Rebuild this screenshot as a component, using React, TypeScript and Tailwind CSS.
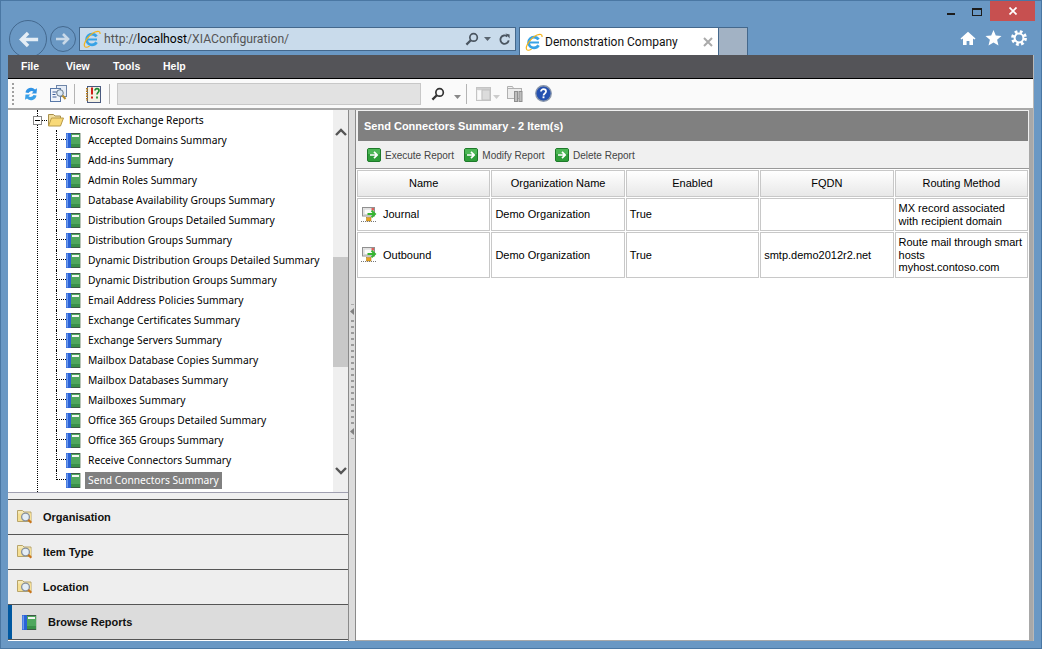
import React from "react";

const Book = ({ className = "" }: { className?: string }) => (
  <svg width="15" height="15" viewBox="0 0 15 15" className={className}>
    <rect x="0" y="0" width="15" height="15" fill="#3d5a46" />
    <rect x="0" y="0" width="5" height="15" fill="#2a62d8" />
    <rect x="0.500" y="0.500" width="1.500" height="14" fill="#6f9bec" />
    <rect x="5" y="1" width="9" height="13" fill="#4fa75e" />
    <rect x="5" y="11" width="9" height="3" fill="#3a9049" />
    <rect x="6" y="2" width="7" height="2" fill="#f2f6f2" />
    <rect x="14" y="0" width="1" height="15" fill="#b9c4ba" />
  </svg>
);

const FolderSearch = () => (
  <svg width="17" height="16" viewBox="0 0 17 16">
    <path d="M.5 1.500h5l1.500 1.500h7v9.500H.5z" fill="#f5e9b8" stroke="#b8a468" />
    <path d="M1 4.500h13v7.500H1z" fill="#f6df92" />
    <circle cx="8.500" cy="8" r="3.900" fill="#e4edf6" stroke="#87919c" strokeWidth="1.300" />
    <path d="M11.300 10.800l3 3" stroke="#c8741c" strokeWidth="2.200" />
  </svg>
);

const OpenFolder = () => (
  <svg width="17" height="14" viewBox="0 0 17 14">
    <path d="M1.500 13V1.500h5l1.500 1.500h5.500V5" fill="#f2dfa0" stroke="#a88f4c" />
    <path d="M1.500 13l3-8h12l-3 8z" fill="#f8d978" stroke="#b89a48" />
  </svg>
);

const GreenArrow = () => (
  <svg width="14" height="14" viewBox="0 0 14 14">
    <rect x="0.500" y="0.500" width="13" height="13" rx="1.500" fill="#2f9e3a" stroke="#1e7a2a" />
    <rect x="1" y="1" width="12" height="5" fill="#4cb655" />
    <path d="M3 7h6.500M7 3.800L10.200 7 7 10.200" fill="none" stroke="#fff" strokeWidth="1.700" />
  </svg>
);

const Connector = () => (
  <svg width="17" height="16" viewBox="0 0 17 16">
    <rect x="1.500" y="0.500" width="12" height="8.500" fill="#eeeeee" stroke="#909090" />
    <rect x="3" y="2" width="9" height="5.500" fill="#fbfbfb" stroke="#d4d4d4" />
    <rect x="10.500" y="1" width="2.500" height="2.500" fill="#e0605a" />
    <path d="M6.500 7h7M10.500 3.600L14 7l-3.500 3.400" fill="none" stroke="#36b532" strokeWidth="2" />
    <rect x="5.500" y="10.500" width="4.500" height="3.500" fill="#e8a420" stroke="#a87510" strokeWidth="0.500" />
    <path d="M0 14.500h16" stroke="#777" strokeDasharray="1 1" />
  </svg>
);

const IeLogo = () => (
  <svg width="18" height="18" viewBox="0 0 18 18">
    <circle cx="9" cy="9.500" r="5.400" fill="none" stroke="#38a3e6" strokeWidth="2.800" strokeDasharray="27 7" strokeDashoffset="-3" />
    <path d="M4 9.500h10" stroke="#38a3e6" strokeWidth="2" />
    <path d="M2 16.500c-3-2 4-12 10-14.500 3-1 5.500-1 5 2M1.600 16.500c1 1.400 3.600.6 5-.4" fill="none" stroke="#f4b41a" strokeWidth="1.200" />
  </svg>
);

const Sep = () => <div className="h-[20px] w-px bg-[#b4b4b4]" />;

const Search = ({ color = "#333" }: { color?: string }) => (
  <svg width="14" height="14" viewBox="0 0 15 15">
    <circle cx="9.200" cy="5.800" r="4" fill="none" stroke={color} strokeWidth="1.800" />
    <path d="M6.200 8.800L1.500 13.500" stroke={color} strokeWidth="2.400" />
  </svg>
);

const Caret = ({ color = "#888" }: { color?: string }) => (
  <svg width="7" height="4" viewBox="0 0 7 4"><path d="M0 0h7L3.500 4z" fill={color} /></svg>
);

const items = [
  "Accepted Domains Summary",
  "Add-ins Summary",
  "Admin Roles Summary",
  "Database Availability Groups Summary",
  "Distribution Groups Detailed Summary",
  "Distribution Groups Summary",
  "Dynamic Distribution Groups Detailed Summary",
  "Dynamic Distribution Groups Summary",
  "Email Address Policies Summary",
  "Exchange Certificates Summary",
  "Exchange Servers Summary",
  "Mailbox Database Copies Summary",
  "Mailbox Databases Summary",
  "Mailboxes Summary",
  "Office 365 Groups Detailed Summary",
  "Office 365 Groups Summary",
  "Receive Connectors Summary",
  "Send Connectors Summary",
];

const TreeRow = ({ label, last }: { label: string; last: boolean }) => (
  <div className="flex h-[20px] items-center">
    {last ? (
      <div className="h-[10px] w-[10px] self-start border-b border-l border-dotted border-black" />
    ) : (
      <div className="h-[20px] w-[10px] self-start border-l border-dotted border-black">
        <div className="h-[10px] border-b border-dotted border-black" />
      </div>
    )}
    <Book />
    <span
      className={
        last
          ? "ml-[4px] flex h-[17px] items-center bg-[#808080] px-[3px] pt-px text-white"
          : "ml-[7px] pt-[2px] text-black"
      }
    >
      {label}
    </span>
  </div>
);

const Accordion = ({ label }: { label: string }) => (
  <div className="flex h-[35px] items-center border-b border-[#555] bg-[#eeeeee] pl-[9px]">
    <FolderSearch />
    <span className="ml-[9px] text-[11px] font-bold text-[#111]">{label}</span>
  </div>
);

const Action = ({ label }: { label: string }) => (
  <div className="flex items-center">
    <GreenArrow />
    <span className="ml-[4px] text-[10px] text-[#444]">{label}</span>
  </div>
);

const rows = [
  ["Journal", "Demo Organization", "True", "", "MX record associated with recipient domain"],
  ["Outbound", "Demo Organization", "True", "smtp.demo2012r2.net", "Route mail through smart hosts myhost.contoso.com"],
];

export default function App() {
  return (
    <div className="h-[649px] w-[1042px] overflow-hidden border border-[#4a77a3] bg-[#6a98c4] font-['Liberation_Sans',sans-serif]">
      {/* chrome */}
      <div className="flex h-[54px]">
        <div className="mt-[19px] flex h-[35px] items-start pl-[8px]">
          <div className="flex h-[38px] w-[38px] shrink-0 items-center justify-center rounded-full border-[1.500px] border-[#44698f]">
            <svg width="21" height="19" viewBox="0 0 24 20">
              <path d="M23 10H5M11.500 2.500L4 10l7.500 7.500" fill="none" stroke="#e4edf5" strokeWidth="4" />
            </svg>
          </div>
          <div className="ml-[3px] mt-[6px] flex h-[26px] w-[26px] shrink-0 items-center justify-center rounded-full border-[1.500px] border-[#44698f]">
            <svg width="16" height="14" viewBox="0 0 16 14">
              <path d="M1 7h12M8 2l5 5-5 5" fill="none" stroke="#c9d9e8" strokeWidth="2.600" />
            </svg>
          </div>
          <div className="ml-[3px] mt-[7px] flex h-[24px] w-[437px] items-center border border-[#44688c] bg-[#c9dbeb] pl-[3px] pr-[4px]">
            <IeLogo />
            <span className="ml-[3px] pt-px font-['Roboto',sans-serif] text-[12.200px] text-[#555]">
              http://<span className="text-black">localhost</span>/XIAConfiguration/
            </span>
            <div className="ml-auto flex items-center">
              <Search color="#4a5560" />
              <div className="ml-[5px]"><Caret color="#5a6570" /></div>
              <svg width="13" height="13" viewBox="0 0 14 14" className="ml-[7px]">
                <path d="M11.500 8a4.500 4.500 0 1 1-1.500-4.300" fill="none" stroke="#4a5560" strokeWidth="2" />
                <path d="M8 0.500l4.500 1v4.500z" fill="#4a5560" />
              </svg>
            </div>
          </div>
          <div className="ml-[3px] mt-[7px] flex h-[28px] w-[200px] items-center border border-b-0 border-[#44688c] bg-white pl-[5px]">
            <IeLogo />
            <span className="ml-[2px] pt-px font-['Roboto',sans-serif] text-[12px] text-[#111]">Demonstration Company</span>
            <svg width="10" height="10" viewBox="0 0 10 10" className="ml-auto mr-[5px]">
              <path d="M1 1l8 8M9 1l-8 8" stroke="#aaa" strokeWidth="2" />
            </svg>
          </div>
          <div className="mt-[7px] h-[28px] w-[29px] border border-b-0 border-l-0 border-[#44688c] bg-[#a2b2c4]" />
        </div>
        <div className="ml-auto flex flex-col items-end pr-[6px]">
          <div className="flex items-start">
            <div className="mr-[17px] mt-[12px] h-[2px] w-[8px] bg-[#1c1c1c]" />
            <div className="mr-[8px] mt-[7px] h-[8px] w-[10px] border border-t-2 border-[#1c1c1c]" />
            <div className="flex h-[20px] w-[45px] items-center justify-center bg-[#c75050]">
              <svg width="8" height="8" viewBox="0 0 8 8"><path d="M.5.5l7 7M7.500.5l-7 7" stroke="#fff" strokeWidth="1.700" /></svg>
            </div>
          </div>
          <div className="mr-[8px] mt-[9px] flex items-center gap-[9px]">
            <svg width="16" height="15" viewBox="0 0 16 15">
              <path d="M8 .8L.5 7.600l1 1L3 7.400V14h3.600v-4h2.800v4H13V7.400l1.500 1.200 1-1z" fill="#fff" />
            </svg>
            <svg width="17" height="16" viewBox="0 0 17 16">
              <path d="M8.500 0l2.300 5.400 5.700.5-4.400 3.800 1.400 5.800-5-3.100-5 3.100 1.400-5.800L.5 5.900l5.700-.5z" fill="#fff" />
            </svg>
            <svg width="16" height="16" viewBox="0 0 16 16">
              <circle cx="8" cy="8" r="4.400" fill="none" stroke="#fff" strokeWidth="2" />
              <circle cx="8" cy="8" r="6.200" fill="none" stroke="#fff" strokeWidth="3.400" strokeDasharray="2.600 2.270" />
            </svg>
          </div>
        </div>
      </div>

      {/* frame */}
      <div className="relative ml-[7px] flex h-[586px] w-[1026px] flex-col bg-[#b8b8b8] pr-px">
        <div className="flex h-[23px] items-center bg-[#545458] pl-[13px] text-[10.500px] font-bold text-white">
          <span className="w-[45px]">File</span>
          <span className="w-[47px]">View</span>
          <span className="w-[50px]">Tools</span>
          <span>Help</span>
        </div>
        <div className="h-px bg-black" />
        <div className="flex h-[31px] items-center border-b-2 border-[#a8a8a8] bg-[#fafafa] pl-[4px]">
          <div className="h-[22px] w-[2px] border-l-2 border-dotted border-[#a0a0a0]" />
          <svg width="14" height="16" viewBox="0 0 14 16" className="ml-[10px]">
            <path d="M1.500 6.500a5.500 5.500 0 0 1 9.500-3l2-1.300-.5 5.300H7.500l2-1.700A3.200 3.200 0 0 0 4.500 7z" fill="#2f93e6" />
            <path d="M12.500 9.500a5.500 5.500 0 0 1-9.500 3l-2 1.300.5-5.300h5l-2 1.700A3.200 3.200 0 0 0 9.500 9z" fill="#3aa0e8" />
          </svg>
          <svg width="17" height="17" viewBox="0 0 17 17" className="ml-[12px]">
            <rect x="6.500" y="0.500" width="10" height="11" fill="#e6edf7" stroke="#6f86a8" />
            <rect x="0.500" y="3.500" width="10" height="13" fill="#f0f4fa" stroke="#5878a8" />
            <path d="M2.500 7h5M2.500 9.500h3M2.500 12h4" stroke="#3f5f98" />
            <circle cx="10" cy="8" r="3.300" fill="#dceaf6" stroke="#6a7a8a" />
            <path d="M12.500 10.500l3 3.500" stroke="#b89030" strokeWidth="2" />
          </svg>
          <div className="ml-[7px]"><Sep /></div>
          <svg width="15" height="18" viewBox="0 0 15 18" className="ml-[11px]">
            <rect x="1.500" y="1.500" width="13" height="16" fill="#f4f1e4" stroke="#4a5a80" />
            <path d="M1 3v13" stroke="#b07a20" strokeWidth="2" strokeDasharray="1.500 1" />
            <path d="M6 2.500v7M6 11.500v2" stroke="#d0201a" strokeWidth="2" />
            <path d="M9 5.500c0-2.500 4-2.500 4 0 0 2-2 2-2 4M11 11.500v2" fill="none" stroke="#1e8a30" strokeWidth="1.700" />
          </svg>
          <div className="ml-[8px]"><Sep /></div>
          <div className="ml-[7px] h-[22px] w-[304px] border border-[#c8c8c8] bg-[#e2e2e2]" />
          <div className="ml-[10px]"><Search color="#333" /></div>
          <div className="ml-[9px] mt-[6px]"><Caret /></div>
          <div className="ml-[5px]"><Sep /></div>
          <svg width="15" height="14" viewBox="0 0 15 14" className="ml-[9px]">
            <rect x="0.500" y="0.500" width="14" height="13" fill="#f0f0f0" stroke="#c4c4c4" />
            <rect x="1" y="1" width="13" height="2" fill="#cfcfcf" />
            <rect x="6" y="3" width="8" height="10" fill="#dcdcdc" stroke="#c0c0c0" />
            <rect x="2" y="4" width="3" height="8" fill="#fafafa" />
          </svg>
          <div className="ml-[2px] mt-[7px]"><Caret color="#ccc" /></div>
          <svg width="17" height="16" viewBox="0 0 17 16" className="ml-[7px]">
            <path d="M.5 2.500V.5h5l1 2h8v4" fill="#f2f2f2" stroke="#b0b0b0" />
            <rect x="0.500" y="2.500" width="14" height="10" fill="#ececec" stroke="#b0b0b0" />
            <rect x="7.500" y="5.500" width="3" height="10" fill="#bdbdbd" stroke="#8f8f8f" />
            <rect x="12" y="5.500" width="3" height="10" fill="#bdbdbd" stroke="#8f8f8f" />
          </svg>
          <svg width="17" height="17" viewBox="0 0 18 18" className="ml-[11px]">
            <circle cx="9" cy="9" r="8.200" fill="#2450b0" stroke="#8a97aa" strokeWidth="1.400" />
            <path d="M6.300 7c0-3.400 5.400-3.400 5.400 0 0 2-2.700 2-2.700 4" fill="none" stroke="#fff" strokeWidth="1.800" />
            <rect x="8" y="12" width="2" height="2" fill="#fff" />
          </svg>
        </div>

        <div className="flex min-h-0 flex-1">
          {/* left */}
          <div className="flex w-[340px] flex-col bg-white">
            <div className="flex h-[383px] border-b border-[#a0a0b0]">
              <div className="ml-[29px] flex-1 whitespace-nowrap border-l border-dotted border-black font-['Noto_Sans',sans-serif] text-[10.250px]">
                <div className="flex h-[20px] items-center">
                  <div className="-ml-[5px] flex h-[9px] w-[9px] shrink-0 items-center justify-center border border-[#888] bg-white">
                    <div className="h-px w-[5px] bg-black" />
                  </div>
                  <div className="h-px w-[5px] border-b border-dotted border-black" />
                  <OpenFolder />
                  <span className="ml-[5px] pt-[2px] text-black">Microsoft Exchange Reports</span>
                </div>
                <div className="ml-[18px]">
                  {items.map((l, i) => (
                    <TreeRow key={l} label={l} last={i === items.length - 1} />
                  ))}
                </div>
              </div>
              <div className="flex w-[15px] flex-col items-center bg-[#efefef]">
                <svg width="12" height="8" viewBox="0 0 12 8" className="mt-[18px]">
                  <path d="M1 7l5-5 5 5" fill="none" stroke="#555" strokeWidth="2.400" />
                </svg>
                <div className="mt-[121px] h-[110px] w-[15px] bg-[#c8c8c8]" />
                <svg width="12" height="8" viewBox="0 0 12 8" className="mt-[100px]">
                  <path d="M1 1l5 5 5-5" fill="none" stroke="#555" strokeWidth="2.400" />
                </svg>
              </div>
            </div>
            <div className="h-[6px] bg-[#f0f0f0]" />
            <div className="h-px bg-[#555]" />
            <Accordion label="Organisation" />
            <Accordion label="Item Type" />
            <Accordion label="Location" />
            <div className="flex h-[35px] items-center border-b border-[#555] bg-[#dcdcdc]">
              <div className="h-full w-[4px] bg-[#0058a0]" />
              <Book className="ml-[10px]" />
              <span className="ml-[11px] text-[11px] font-bold text-[#111]">Browse Reports</span>
            </div>
          </div>

          {/* splitter */}
          <div className="flex w-[8px] flex-col items-center border-l border-r border-[#8a8a8a] bg-[#dcdcdc] pt-[194px]">
            <div className="h-px w-[3px] bg-[#aaa]" />
            <svg width="4" height="7" viewBox="0 0 4 7" className="mt-[3px]"><path d="M4 0v7L0 3.500z" fill="#808080" /></svg>
            <div className="mt-[5px] flex flex-col gap-[4px]">
              {Array.from({ length: 18 }).map((_, i) => (
                <div key={i} className="h-[2px] w-[3px] bg-[#9a9a9a]" />
              ))}
            </div>
            <svg width="4" height="7" viewBox="0 0 4 7" className="mt-[4px]"><path d="M4 0v7L0 3.500z" fill="#808080" /></svg>
            <div className="mt-[3px] h-px w-[3px] bg-[#aaa]" />
          </div>

          {/* right */}
          <div className="flex min-w-0 flex-1 flex-col border-b border-r-[4px] border-[#a8a8a8] bg-white">
            <div className="bg-[#f0f0f0] pl-[2px] pr-px pt-px">
              <div className="flex h-[30px] items-center bg-[#808080] pl-[6px] text-[11px] font-bold text-white">
                Send Connectors Summary - 2 Item(s)
              </div>
              <div className="flex h-[27px] items-center gap-[10.400px] pl-[9px] pt-px">
                <Action label="Execute Report" />
                <Action label="Modify Report" />
                <Action label="Delete Report" />
              </div>
            </div>
            <div className="h-px bg-[#999]" />
            <table className="w-full table-fixed border-separate border-spacing-[1px] text-[11px] text-black">
              <thead>
                <tr className="h-[27px]">
                  {["Name", "Organization Name", "Enabled", "FQDN", "Routing Method"].map((h) => (
                    <th key={h} className="border border-[#c8c8c8] bg-gradient-to-b from-white to-[#e8e8e8] p-0 text-center font-normal">
                      {h}
                    </th>
                  ))}
                </tr>
              </thead>
              <tbody>
                {rows.map((r, i) => (
                  <tr key={r[0]} className={i === 0 ? "h-[33px]" : "h-[46px]"}>
                    <td className="border border-[#c8c8c8] px-[3px] py-0">
                      <div className="flex items-center">
                        <Connector />
                        <span className="ml-[5px]">{r[0]}</span>
                      </div>
                    </td>
                    {r.slice(1).map((c, j) => (
                      <td key={j} className="border border-[#c8c8c8] px-[3px] py-0 leading-[12.500px]">
                        {c}
                      </td>
                    ))}
                  </tr>
                ))}
              </tbody>
            </table>
          </div>
        </div>
      </div>
    </div>
  );
}
